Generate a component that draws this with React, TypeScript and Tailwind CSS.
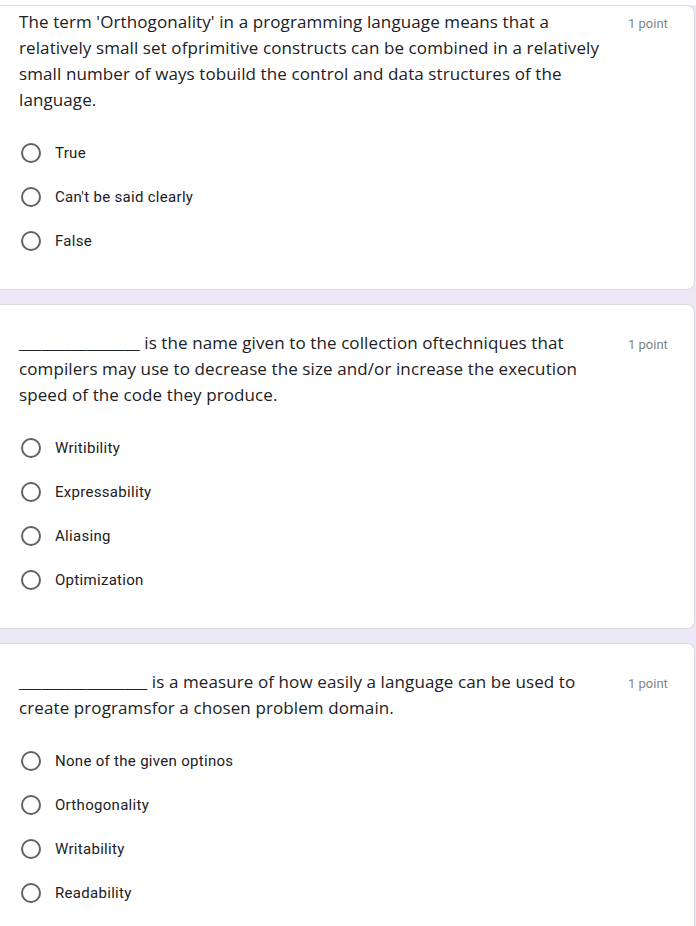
const questions = [
  {
    text: "The term 'Orthogonality' in a programming language means that a relatively small set ofprimitive constructs can be combined in a relatively small number of ways tobuild the control and data structures of the language.",
    options: ['True', "Can't be said clearly", 'False'],
  },
  {
    text: '________________ is the name given to the collection oftechniques that compilers may use to decrease the size and/or increase the execution speed of the code they produce.',
    options: ['Writibility', 'Expressability', 'Aliasing', 'Optimization'],
  },
  {
    text: '_________________ is a measure of how easily a language can be used to create programsfor a chosen problem domain.',
    options: ['None of the given optinos', 'Orthogonality', 'Writability', 'Readability'],
  },
];

const Radio = ({ label }: { label: string }) => (
  <div className="flex items-center h-[44px]">
    <div className="w-5 h-5 rounded-full border-2 border-[#5f6368] ml-[2px]" />
    <span className="ml-[14px] text-[15px] text-[#202124] font-['Roboto',sans-serif] tracking-[0.3px]">
      {label}
    </span>
  </div>
);

const Card = ({
  q,
  first,
}: {
  q: (typeof questions)[number];
  first?: boolean;
}) => (
  <div
    className={`bg-white border-y border-r border-[#dadce0] rounded-r-lg w-[695px] pl-[19px] pr-[26px] pb-[26px] ${
      first ? 'pt-[3px]' : 'pt-[25px]'
    }`}
  >
    <div className="flex items-start">
      <div className="flex-1 text-[17px] leading-[26px] tracking-[0.1px] text-[#202124] font-['Open_Sans',sans-serif]">
        {q.text}
      </div>
      <div className="ml-[28px] w-[40px] pt-[2px] text-[13px] leading-[26px] text-[#80868b] font-['Roboto',sans-serif] whitespace-nowrap">
        1 point
      </div>
    </div>
    <div className="mt-[18px]">
      {q.options.map((o) => (
        <Radio key={o} label={o} />
      ))}
    </div>
  </div>
);

export default function App() {
  return (
    <div className="min-h-screen bg-[#ece8f6] overflow-hidden">
      <div className="bg-white h-[5px]" />
      <div className="flex flex-col gap-[14px]">
        {questions.map((q, i) => (
          <Card key={i} q={q} first={i === 0} />
        ))}
      </div>
    </div>
  );
}
